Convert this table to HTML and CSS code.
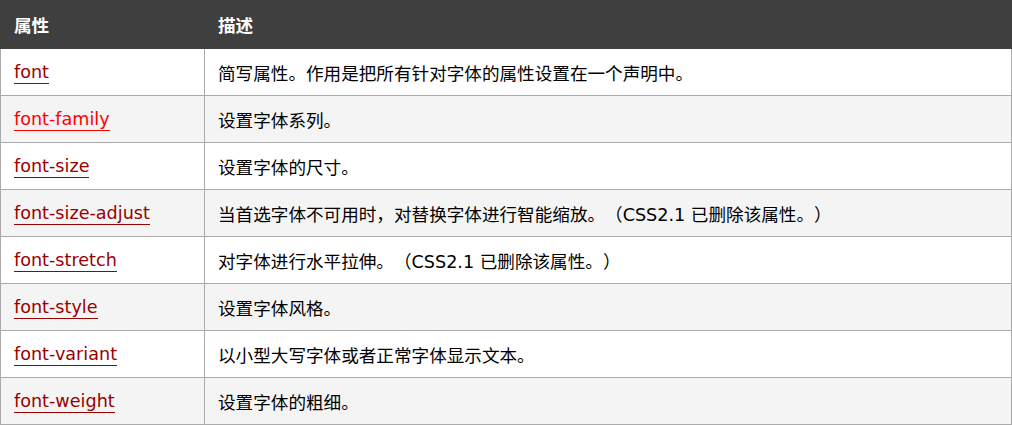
FILE: index.html
```html
<!DOCTYPE html>
<html lang="zh">
<head>
<meta charset="utf-8">
<link rel="stylesheet" href="styles.css">
</head>
<body>
<table class="ref">
  <thead>
    <tr><th class="c1">属性</th><th>描述</th></tr>
  </thead>
  <tbody>
    <tr><td class="c1"><a href="#">font</a></td><td>简写属性。作用是把所有针对字体的属性设置在一个声明中。</td></tr>
    <tr><td class="c1"><a href="#" class="hover">font-family</a></td><td>设置字体系列。</td></tr>
    <tr><td class="c1"><a href="#">font-size</a></td><td>设置字体的尺寸。</td></tr>
    <tr><td class="c1"><a href="#">font-size-adjust</a></td><td>当首选字体不可用时，对替换字体进行智能缩放。（CSS2.1 已删除该属性。）</td></tr>
    <tr><td class="c1"><a href="#">font-stretch</a></td><td>对字体进行水平拉伸。（CSS2.1 已删除该属性。）</td></tr>
    <tr><td class="c1"><a href="#">font-style</a></td><td>设置字体风格。</td></tr>
    <tr><td class="c1"><a href="#">font-variant</a></td><td>以小型大写字体或者正常字体显示文本。</td></tr>
    <tr><td class="c1"><a href="#">font-weight</a></td><td>设置字体的粗细。</td></tr>
  </tbody>
</table>
</body>
</html>
```
FILE: styles.css
```css
html, body {
  margin: 0;
  padding: 0;
  background: #fff;
}
body {
  font-family: "DejaVu Sans", Verdana, "Noto Sans CJK SC", sans-serif;
  font-size: 17.6px;
  color: #000;
  text-spacing-trim: space-all;
}
.ref {
  width: 1012px;
  border-collapse: collapse;
  table-layout: fixed;
}
.ref th {
  background: #3f3f3f;
  color: #fff;
  font-weight: bold;
  text-align: left;
  height: 48px;
  padding: 0 0 1px 13px;
  box-sizing: border-box;
  border: 1px solid #3f3f3f;
  font-family: "Noto Sans CJK SC", sans-serif;
}
.ref td {
  height: 47px;
  box-sizing: border-box;
  padding: 0 0 0 13px;
  border: 1px solid #aaa;
  vertical-align: middle;
}
.ref .c1 {
  width: 204px;
}
.ref tbody tr:nth-child(even) td {
  background: #f4f4f4;
}
.ref a {
  color: #900;
  text-decoration: none;
  border-bottom: 1px solid #900;
  padding-bottom: 1px;
}
.ref a.hover {
  color: #f00;
  border-bottom-color: #f00;
}
```
